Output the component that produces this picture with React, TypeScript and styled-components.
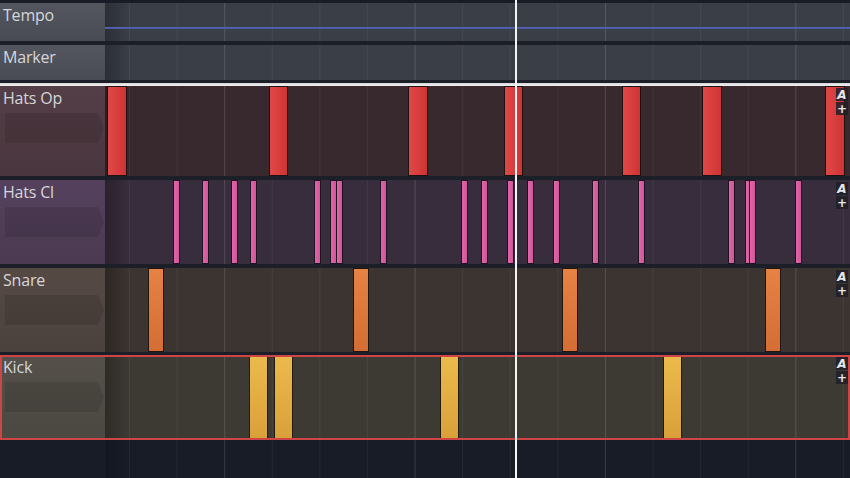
import React from "react";
import styled, { createGlobalStyle } from "styled-components";

const HEADER_W = 105;
const STEP = 47.6;

type Note = { x: number; w: number };

type Track = {
  name: string;
  height: number;
  header: string;
  lane: string;
  note?: string;
  noteEdge?: string;
  notes: Note[];
  arrow?: boolean;
  tools?: boolean;
  selected?: boolean;
  tempoLine?: boolean;
  sep: string;
};

const at = (xs: number[], w: number): Note[] => xs.map((x) => ({ x: x - HEADER_W, w }));

const tracks: Track[] = [
  {
    name: "Tempo",
    height: 38,
    header: "linear-gradient(180deg, #53565e 0%, #494c54 100%)",
    lane: "#3a3e47",
    notes: [],
    tempoLine: true,
    sep: "4px solid #1c1f27",
  },
  {
    name: "Marker",
    height: 35,
    header: "linear-gradient(180deg, #53565e 0%, #494c54 100%)",
    lane: "#3a3e47",
    notes: [],
    sep: "3px solid #1c1f27",
  },
  {
    name: "Hats Op",
    height: 90,
    header: "linear-gradient(180deg, #543e47 0%, #4a363e 100%)",
    lane: "#38292f",
    note: "linear-gradient(90deg, #e04848 0%, #cf3434 100%)",
    noteEdge: "#1d1114",
    notes: [
      { x: 2, w: 20 },
      { x: 164, w: 19 },
      { x: 303, w: 20 },
      { x: 399, w: 19 },
      { x: 517, w: 19 },
      { x: 597, w: 20 },
      { x: 720, w: 20 },
    ],
    arrow: true,
    tools: true,
    sep: "4px solid #1c1f27",
  },
  {
    name: "Hats Cl",
    height: 84,
    header: "linear-gradient(180deg, #55415e 0%, #4b3a51 100%)",
    lane: "#382d3c",
    note: "linear-gradient(90deg, #e066a8 0%, #d2549a 100%)",
    noteEdge: "#1d1420",
    notes: at(
      [173, 202, 231, 250, 314, 330, 336, 380, 461, 481, 507, 527, 553, 592, 638, 728, 745, 749, 795],
      7
    ),
    arrow: true,
    tools: true,
    sep: "4px solid #1c1f27",
  },
  {
    name: "Snare",
    height: 84,
    header: "linear-gradient(180deg, #554944 0%, #4b423e 100%)",
    lane: "#3c3431",
    note: "linear-gradient(180deg, #e68244 0%, #d46e34 100%)",
    noteEdge: "#22150f",
    notes: at([148, 353, 562, 765], 16),
    arrow: true,
    tools: true,
    sep: "3px solid #1c1f27",
  },
  {
    name: "Kick",
    height: 85,
    header: "linear-gradient(180deg, #55514a 0%, #4b4842 100%)",
    lane: "#3d3a34",
    note: "linear-gradient(180deg, #ecba4c 0%, #d9a03a 100%)",
    noteEdge: "#221c10",
    notes: at([249, 274, 440, 663], 19),
    arrow: true,
    tools: true,
    selected: true,
    sep: "none",
  },
];

const Global = createGlobalStyle`
  html, body {
    margin: 0;
    padding: 0;
    background: #181c27;
    overflow: hidden;
  }
  body {
    font-family: "Open Sans", "Noto Sans", sans-serif;
  }
`;

const grid = `
  linear-gradient(90deg, rgba(255,255,255,0.09) 0 1px, transparent 1px),
  linear-gradient(90deg, rgba(255,255,255,0.05) 0 1px, transparent 1px)
`;

const Page = styled.div`
  position: relative;
  width: 850px;
  height: 478px;
  display: flex;
  flex-direction: column;
  padding-top: 3px;
  box-sizing: border-box;
  background: #181c27;
`;

const Row = styled.div<{ $h: number; $sep: string }>`
  position: relative;
  display: flex;
  height: ${({ $h }) => $h}px;
  flex: none;
  border-bottom: ${({ $sep }) => $sep};
  box-sizing: content-box;
`;

const Divider = styled.div`
  height: 3px;
  flex: none;
  background: linear-gradient(180deg, #d8d8da 0%, #f2f2f2 100%);
`;

const Header = styled.div<{ $bg: string }>`
  width: ${HEADER_W}px;
  flex: none;
  display: flex;
  flex-direction: column;
  gap: 4px;
  padding: 2px 0 0 3px;
  box-sizing: border-box;
  background: ${({ $bg }) => $bg};
`;

const Name = styled.div`
  color: #d6d6da;
  font-size: 16px;
  line-height: 21px;
  letter-spacing: -0.2px;
  white-space: nowrap;
`;

const Arrow = styled.div`
  width: 99px;
  height: 30px;
  margin-left: 2px;
  background: rgba(0, 0, 0, 0.11);
  clip-path: polygon(0 0, 93px 0, 99px 50%, 93px 100%, 0 100%);
`;

const Lane = styled.div<{ $bg: string }>`
  position: relative;
  flex: 1;
  background:
    linear-gradient(90deg, rgba(0, 0, 0, 0.26) 0px, rgba(0, 0, 0, 0) 24px),
    ${grid},
    ${({ $bg }) => $bg};
  background-size: 100% 100%, ${STEP * 4}px 100%, ${STEP}px 100%, 100% 100%;
  background-repeat: no-repeat, repeat-x, repeat-x, no-repeat;
  background-position: 0 0, ${24 + STEP * 2}px 0, 24px 0, 0 0;
`;

const Bottom = styled.div`
  flex: 1;
  margin-left: ${HEADER_W}px;
  background:
    linear-gradient(90deg, rgba(0, 0, 0, 0.2) 0px, rgba(0, 0, 0, 0) 24px),
    ${grid},
    #181c27;
  background-size: 100% 100%, ${STEP * 4}px 100%, ${STEP}px 100%, 100% 100%;
  background-repeat: no-repeat, repeat-x, repeat-x, no-repeat;
  background-position: 0 0, ${24 + STEP * 2}px 0, 24px 0, 0 0;
`;

const TempoLine = styled.div`
  position: absolute;
  left: 0;
  right: 0;
  top: 24px;
  height: 2px;
  background: linear-gradient(180deg, #5666c4 0%, #4a5596 100%);
`;

const NoteBar = styled.div<{ $bg: string; $edge: string }>`
  position: absolute;
  top: 0;
  bottom: 0;
  box-sizing: border-box;
  background: ${({ $bg }) => $bg};
  border: 1px solid ${({ $edge }) => $edge};
`;

const Tools = styled.div`
  position: absolute;
  top: 2px;
  right: 2px;
  display: flex;
  flex-direction: column;
  gap: 1px;
`;

const ToolBtn = styled.div<{ $italic?: boolean }>`
  width: 12px;
  height: 13px;
  display: flex;
  align-items: center;
  justify-content: center;
  background: rgba(30, 32, 40, 0.85);
  color: #e6e6ea;
  font-family: "DejaVu Sans", sans-serif;
  font-size: 12px;
  font-weight: bold;
  font-style: ${({ $italic }) => ($italic ? "italic" : "normal")};
  line-height: 1;
`;

const Selection = styled.div`
  position: absolute;
  inset: 0;
  border: 2px solid #cf4444;
  pointer-events: none;
`;

const Playhead = styled.div`
  position: absolute;
  top: 0;
  bottom: 0;
  left: 515px;
  width: 2px;
  background: #f4f4f4;
  pointer-events: none;
`;

export default function App() {
  return (
    <>
      <Global />
      <Page>
        {tracks.map((t) => (
          <React.Fragment key={t.name}>
            <Row $h={t.height} $sep={t.sep}>
              <Header $bg={t.header}>
                <Name>{t.name}</Name>
                {t.arrow && <Arrow />}
              </Header>
              <Lane $bg={t.lane}>
                {t.tempoLine && <TempoLine />}
                {t.notes.map((n, i) => (
                  <NoteBar
                    key={i}
                    $bg={t.note!}
                    $edge={t.noteEdge!}
                    style={{ left: n.x, width: n.w }}
                  />
                ))}
                {t.tools && (
                  <Tools>
                    <ToolBtn $italic>A</ToolBtn>
                    <ToolBtn>+</ToolBtn>
                  </Tools>
                )}
              </Lane>
              {t.selected && <Selection />}
            </Row>
            {t.name === "Marker" && <Divider />}
          </React.Fragment>
        ))}
        <Bottom />
        <Playhead />
      </Page>
    </>
  );
}
